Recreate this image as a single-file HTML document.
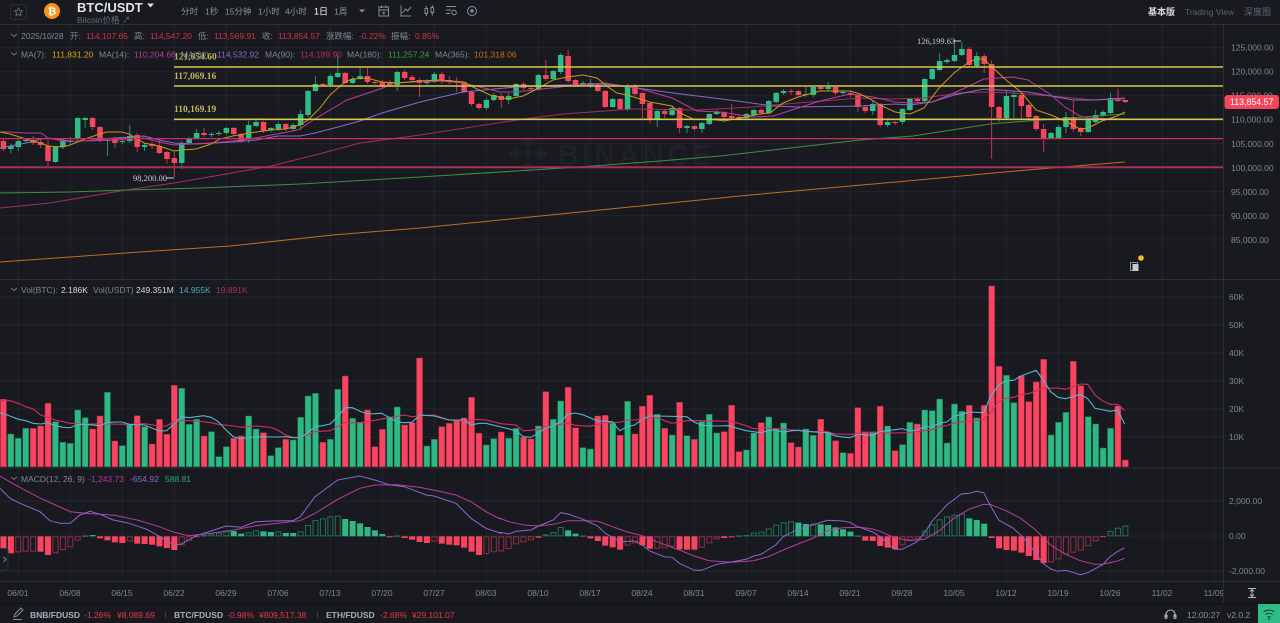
<!DOCTYPE html>
<html lang="zh">
<head>
<meta charset="utf-8">
<title>BTC/USDT</title>
<style>
html,body{margin:0;padding:0;background:#181a20;width:1280px;height:623px;overflow:hidden}
svg{display:block;position:absolute;left:0;top:0}
text{font-family:"Liberation Sans","Noto Sans CJK SC",sans-serif;font-size:8.5px;fill:#7f8794}
.y{font-size:8.5px;fill:#7f8794}
.d{font-size:8.5px;fill:#7f8794;text-anchor:middle}
.t{font-size:8.5px;fill:#8a919e}
.r{fill:#cf304a}
.k{font-family:"Liberation Serif",serif;font-size:9.5px;font-weight:700;fill:#c4b65a}
.m{font-family:"Liberation Serif",serif;font-size:8.5px;fill:#c8ccd2}
.s{fill:#e8384f;font-size:8.5px}
.p{fill:#a8afba;font-size:8.5px;font-weight:700}
.gl line{stroke:#22252b;stroke-width:1}
.ma{fill:none;stroke-width:1}
</style>
</head>
<body>
<svg width="1280" height="623" viewBox="0 0 1280 623" xmlns="http://www.w3.org/2000/svg">
<defs><clipPath id="c"><rect x="0" y="24" width="1223" height="579"/></clipPath></defs>
<rect width="1280" height="623" fill="#181a20"/>

<g class="gl" id="grid">
<line x1="0" x2="1224" y1="47.7" y2="47.7"/><line x1="0" x2="1224" y1="71.7" y2="71.7"/><line x1="0" x2="1224" y1="95.7" y2="95.7"/><line x1="0" x2="1224" y1="119.8" y2="119.8"/><line x1="0" x2="1224" y1="143.8" y2="143.8"/><line x1="0" x2="1224" y1="167.8" y2="167.8"/><line x1="0" x2="1224" y1="191.8" y2="191.8"/><line x1="0" x2="1224" y1="215.8" y2="215.8"/><line x1="0" x2="1224" y1="239.9" y2="239.9"/>
<line x1="0" x2="1224" y1="297" y2="297"/><line x1="0" x2="1224" y1="325" y2="325"/><line x1="0" x2="1224" y1="353" y2="353"/><line x1="0" x2="1224" y1="381" y2="381"/><line x1="0" x2="1224" y1="409" y2="409"/><line x1="0" x2="1224" y1="437" y2="437"/>
<line x1="0" x2="1224" y1="501" y2="501"/><line x1="0" x2="1224" y1="536" y2="536"/><line x1="0" x2="1224" y1="571" y2="571"/>
</g>

<!-- watermark -->
<g fill="#1e2127">
<path d="M528 134l7 7-7 7-7-7zM515 147l7 7-7 7-7-7zM541 147l7 7-7 7-7-7zM528 160l7 7-7 7-7-7zM528 149l5 5-5 5-5-5z"/>
</g>
<text x="558" y="165" style="font-size:29px;font-weight:700;letter-spacing:3.5px;fill:#1e2127">BINANCE</text>

<g id="chart" clip-path="url(#c)"></g>

<g clip-path="url(#c)">
<polyline class="ma" stroke="#a3305c" points="0,208 50,203 126,190 174,183 226,174 271,166 315,155 360,143 420,135 517,120 563,114 633,109 697,110 753,107 773,105 860,98 893,99 923,98 960,93 984,92 1013,93 1051,96 1093,100 1125,99"/>
<polyline class="ma" stroke="#3f8f45" points="0,193 70,192 126,190 200,188 300,184 420,177 580,167 660,161 720,156 860,140 913,136 990,124 1027,121 1125,114"/>
<polyline class="ma" stroke="#c06f1e" points="0,262 126,253 230,246 333,235 420,228 600,210 750,195 918,180 1027,170 1125,162"/>
<polyline class="ma" stroke="#8a68cf" points="0,148 15,145 26,143 41,139 48,138 70,141 85,141 115,138 144,136 159,140 174,143 196,144 233,142 256,140 278,136 300,136 315,133 338,127 360,121 382,113 420,102 463,92 516,87 560,85 578,85 605,84 637,88 673,93 730,100 773,106 798,107 860,106 895,104 910,105 932,102 954,95 984,89 1013,91 1028,92 1051,96 1073,100 1093,100 1125,98"/>
<polyline class="ma" stroke="#bb3d9d" points="0,132 10,132 26,133 41,133 48,138 63,141 85,141 115,140 144,138 159,142 174,145 189,144 211,143 233,141 256,138 271,135 293,131 300,129 313,120 347,100 383,88 393,83 413,82 440,81 463,83 480,87 500,92 515,92 533,90 560,87 577,85 605,83 637,88 672,98 697,111 720,112 753,117 773,116 798,108 820,101 850,94 873,97 895,102 910,103 932,102 954,93 984,79 1013,77 1028,80 1051,95 1065,107 1080,116 1088,118 1125,119"/>
<polyline class="ma" stroke="#c99a16" points="0,132 10,134 26,139 41,143 48,146 63,147 70,145 85,139 100,134 107,132 122,132 129,134 144,143 159,146 174,151 182,150 196,149 211,144 220,139 233,136 256,132 271,130 286,129 300,125 308,120 320,108 330,95 345,82 352,79 367,78 382,82 397,83 419,81 441,80 463,82 475,88 490,95 508,99 523,96 535,90 553,80 567,77 583,75 597,78 608,87 617,93 627,95 650,102 672,106 680,113 693,119 717,120 724,121 740,118 760,114 770,113 783,103 798,97 820,91 850,91 860,94 870,99 880,105 895,112 910,114 924,108 939,88 954,73 969,62 976,59 984,59 991,66 1006,80 1021,92 1036,110 1051,115 1065,121 1080,129 1088,128 1102,121 1117,116 1125,112"/>

<line x1="174" x2="1224" y1="67" y2="67" stroke="#d6c850" stroke-width="1.6"/>
<line x1="174" x2="1224" y1="86" y2="86" stroke="#d6c850" stroke-width="1.6"/>
<line x1="174" x2="1224" y1="119.3" y2="119.3" stroke="#d6c850" stroke-width="1.6"/>
<line x1="0" x2="1224" y1="138.6" y2="138.6" stroke="#c92f5f" stroke-width="1.3"/>
<line x1="0" x2="1224" y1="167.3" y2="167.3" stroke="#a62f59" stroke-width="2"/>
</g>

<text class="k" x="174" y="59.5">121,054.60</text>
<text class="k" x="174" y="79">117,069.16</text>
<text class="k" x="174" y="112">110,169.19</text>
<text class="m" x="133" y="181">98,200.00</text><line x1="166" x2="174" y1="178" y2="178" stroke="#c8ccd2"/>
<text class="m" x="917" y="44">126,199.63</text><line x1="953" x2="961" y1="41" y2="41" stroke="#c8ccd2"/>

<!-- small chat icon -->
<g transform="translate(1130,262)"><rect x="0.5" y="0.5" width="7" height="8" fill="none" stroke="#8a919e"/><rect x="2.5" y="2" width="6" height="7" fill="#c8ccd2"/></g>
<circle cx="1141" cy="258" r="2.8" fill="#f0c020"/>

<!-- dividers -->
<g stroke="#2b2f36" stroke-width="1">
<line x1="0" x2="1280" y1="24.5" y2="24.5"/>
<line x1="0" x2="1280" y1="279.5" y2="279.5"/>
<line x1="0" x2="1280" y1="468" y2="468"/>
<line x1="0" x2="1280" y1="581.5" y2="581.5"/>
<line x1="1223.5" x2="1223.5" y1="24" y2="603"/>
</g>
<rect x="0" y="603" width="1280" height="1" fill="#0e1014"/>

<!-- header -->
<rect x="10.5" y="4.5" width="16" height="15" rx="3" fill="none" stroke="#2b2f36"/>
<path d="M18.5 8l1.2 2.6 2.8.3-2.1 1.9.6 2.8-2.5-1.4-2.5 1.4.6-2.8-2.1-1.9 2.8-.3z" fill="none" stroke="#5e6673"/>
<circle cx="52" cy="11" r="8" fill="#f7931a"/>
<text x="52" y="14.5" style="font-size:10.5px;font-weight:700;fill:#fff;text-anchor:middle">₿</text>
<text x="77" y="12" style="font-size:13px;font-weight:700;fill:#dfe2e6">BTC/USDT</text>
<path d="M147 3.5h7l-3.5 4z" fill="#dfe2e6"/>
<text x="77" y="23" style="font-size:8.5px;fill:#676f7c">Bitcoin价格 ↗</text>
<g style="font-size:9px">
<text class="t" x="181" y="14.5">分时</text>
<text class="t" x="205" y="14.5">1秒</text>
<text class="t" x="225" y="14.5">15分钟</text>
<text class="t" x="258" y="14.5">1小时</text>
<text class="t" x="285" y="14.5">4小时</text>
<text x="314" y="14.5" style="fill:#ffffff;font-size:9px">1日</text>
<text class="t" x="334" y="14.5">1周</text>
</g>
<path d="M359 9.5h6l-3 3z" fill="#8a919e"/>
<g fill="none" stroke="#848e9c" stroke-width="1">
<rect x="379" y="7" width="9.5" height="9"/><path d="M379 10h9.5M381.5 5.5v2.5M386 5.5v2.5M383.8 11.5v3M382.3 13h3"/>
<path d="M401 5.5v10.5h10M402.5 13l3-4 2 2 3.5-4"/>
<path d="M425 8.5h2.6v5H425zM431 7.5h2.6v5H431zM426.3 6v2.5M426.3 13.5v2.5M432.3 5v2.5M432.3 12.5v3"/>
<path d="M446 6.5h10M446 10h5M446 13.5h4"/><circle cx="454" cy="12.5" r="2.3"/>
<circle cx="472" cy="11" r="4.5"/><circle cx="472" cy="11" r="1.2" fill="#848e9c"/>
</g>
<text x="1148" y="15" style="font-size:9px;font-weight:700;fill:#d5d8dc">基本版</text>
<text x="1185" y="15" style="font-size:8.5px;fill:#5e6673">Trading View</text>
<text x="1244" y="15" style="font-size:9px;fill:#5e6673">深度图</text>

<!-- chevrons -->
<g fill="none" stroke="#6c7480" stroke-width="1">
<path d="M11 34l3 2.5 3-2.5M11 52.5l3 2.5 3-2.5M11 288l3 2.5 3-2.5M11 477l3 2.5 3-2.5"/>
</g>

<!-- legends -->
<text x="21" y="39">2025/10/28</text><text x="70" y="39">开:</text><text class="r" x="86" y="39">114,107.65</text>
<text x="134" y="39">高:</text><text class="r" x="150" y="39">114,547.20</text>
<text x="198" y="39">低:</text><text class="r" x="214" y="39">113,569.91</text>
<text x="262" y="39">收:</text><text class="r" x="278" y="39">113,854.57</text>
<text x="326" y="39">涨跌幅:</text><text class="r" x="359" y="39">-0.22%</text>
<text x="391" y="39">振幅:</text><text class="r" x="415" y="39">0.85%</text>

<text x="21" y="57.5">MA(7):</text><text x="52" y="57.5" style="fill:#d9a514">111,831.20</text>
<text x="99" y="57.5">MA(14):</text><text x="134" y="57.5" style="fill:#b63a9b">110,204.66</text>
<text x="181" y="57.5">MA(30):</text><text x="217" y="57.5" style="fill:#8a68cf">114,532.92</text>
<text x="265" y="57.5">MA(90):</text><text x="300" y="57.5" style="fill:#bb2f58">114,189.90</text>
<text x="347" y="57.5">MA(180):</text><text x="388" y="57.5" style="fill:#3f9a4a">111,257.24</text>
<text x="435" y="57.5">MA(365):</text><text x="474" y="57.5" style="fill:#c8731c">101,318.06</text>

<text x="21" y="293">Vol(BTC):</text><text x="61" y="293" style="fill:#d5d8dc">2.186K</text>
<text x="93" y="293">Vol(USDT)</text><text x="136" y="293" style="fill:#d5d8dc">249.351M</text>
<text x="179" y="293" style="fill:#4aa9c4">14.955K</text><text x="216" y="293" style="fill:#b52c55">19.891K</text>

<text x="21" y="482">MACD(12, 26, 9)</text><text x="88" y="482" style="fill:#b63a9b">-1,243.73</text>
<text x="130" y="482" style="fill:#8a68cf">-654.92</text><text x="165" y="482" style="fill:#2ba57a">588.81</text>

<!-- price axis -->
<text class="y" x="1231" y="50.5">125,000.00</text>
<text class="y" x="1231" y="74.5">120,000.00</text>
<text class="y" x="1231" y="98.5">115,000.00</text>
<text class="y" x="1231" y="122.7">110,000.00</text>
<text class="y" x="1231" y="146.8">105,000.00</text>
<text class="y" x="1231" y="170.8">100,000.00</text>
<text class="y" x="1231" y="194.8">95,000.00</text>
<text class="y" x="1231" y="218.8">90,000.00</text>
<text class="y" x="1231" y="242.8">85,000.00</text>
<rect x="1224.5" y="95" width="54.5" height="14" rx="3" fill="#f6465d"/>
<text x="1251.7" y="105" style="font-size:8.8px;fill:#fff;text-anchor:middle">113,854.57</text>

<text class="y" x="1229" y="300">60K</text><text class="y" x="1229" y="328">50K</text><text class="y" x="1229" y="356">40K</text><text class="y" x="1229" y="384">30K</text><text class="y" x="1229" y="412">20K</text><text class="y" x="1229" y="440">10K</text>
<text class="y" x="1229" y="504">2,000.00</text><text class="y" x="1229" y="539">0.00</text><text class="y" x="1229" y="574">-2,000.00</text>

<!-- date axis -->
<g clip-path="url(#c)">
<text class="d" x="18" y="596">06/01</text><text class="d" x="70" y="596">06/08</text><text class="d" x="122" y="596">06/15</text><text class="d" x="174" y="596">06/22</text><text class="d" x="226" y="596">06/29</text><text class="d" x="278" y="596">07/06</text><text class="d" x="330" y="596">07/13</text><text class="d" x="382" y="596">07/20</text><text class="d" x="434" y="596">07/27</text><text class="d" x="486" y="596">08/03</text><text class="d" x="538" y="596">08/10</text><text class="d" x="590" y="596">08/17</text><text class="d" x="642" y="596">08/24</text><text class="d" x="694" y="596">08/31</text><text class="d" x="746" y="596">09/07</text><text class="d" x="798" y="596">09/14</text><text class="d" x="850" y="596">09/21</text><text class="d" x="902" y="596">09/28</text><text class="d" x="954" y="596">10/05</text><text class="d" x="1006" y="596">10/12</text><text class="d" x="1058" y="596">10/19</text><text class="d" x="1110" y="596">10/26</text><text class="d" x="1162" y="596">11/02</text><text class="d" x="1214" y="596">11/09</text>
</g>
<g fill="none" stroke="#b0b6c0" stroke-width="1"><path d="M1248 588.5h8M1248 597.5h8M1252 590v6M1250 591.5l2-2 2 2M1250 594.5l2 2 2-2"/></g>

<!-- collapse button -->
<rect x="-4" y="548.5" width="12" height="22" rx="3" fill="#181a20" stroke="#2b2f36"/>
<path d="M3.5 557l2.5 2.5-2.5 2.5" fill="none" stroke="#7f8794"/>

<!-- status bar -->
<g fill="none" stroke="#848e9c" stroke-width="1"><path d="M14 617l1-3 6-6 2 2-6 6zM13 619.5h9"/></g>
<text class="p" x="30" y="618">BNB/FDUSD</text><text class="s" x="84" y="618">-1.26%</text><text class="s" x="117" y="618">¥8,089.69</text>
<rect x="165" y="611" width="1" height="7" fill="#3a3f47"/>
<text class="p" x="174" y="618">BTC/FDUSD</text><text class="s" x="227" y="618">-0.98%</text><text class="s" x="259" y="618">¥809,517.38</text>
<rect x="317" y="611" width="1" height="7" fill="#3a3f47"/>
<text class="p" x="326" y="618">ETH/FDUSD</text><text class="s" x="380" y="618">-2.68%</text><text class="s" x="412" y="618">¥29,101.07</text>

<g fill="none" stroke="#a8afba" stroke-width="1.1"><path d="M1166 617v-2.5a4.5 4.5 0 0 1 9 0v2.5"/><rect x="1165" y="614.5" width="2" height="4" rx="1"/><rect x="1174" y="614.5" width="2" height="4" rx="1"/></g>
<text x="1187" y="618" style="fill:#8a919e;font-size:8.5px">12:00:27</text>
<text x="1227" y="618" style="fill:#8a919e;font-size:8.5px">v2.0.2</text>
<rect x="1258" y="604" width="22" height="19" fill="#2ebd85"/>
<g fill="none" stroke="#123b2c" stroke-width="1"><path d="M1263.5 612a9 9 0 0 1 11 0M1265.5 614.5a6 6 0 0 1 7 0M1267.5 617a3 3 0 0 1 3 0"/></g>
<circle cx="1269" cy="619" r=".9" fill="#123b2c"/>
</svg>
<script>
(function(){
var G='#2ebd85',R='#f6465d',X=function(i){return 18.3+7.43*i};
var NS='http://www.w3.org/2000/svg',root=document.getElementById('chart');
function el(tag,attrs){var e=document.createElementNS(NS,tag);for(var a in attrs){e.setAttribute(a,attrs[a])}root.appendChild(e)}
/* candles: colour, top, bottom, high, low */
var c=[
'r141,149,139,151','g146,149,144,153','g141,147,139,151','g140,141,138,143','r140,143,136,145','r142,145,139,148','r146,161,140,166','g147,162,146,163','g141,147,139,149','g141,142,137,144','g118,139,117,140','g118,120,117,128','r118,127,117,130','r127,141,126,142','g140,141,138,156','r139,143,137,148','g141,142,139,144','g136,141,125,143','r135,147,133,152','g145,147,143,151','r144,146,142,149','r146,153,138,154','r152,159,151,164','r158,163,152,177','g143,163,141,169','g139,143,137,145','g133,138,129,139','r133,135,128,137','g134,135,132,137','g133,134,131,136','g128,133,127,135','r128,134,127,136','r134,141,133,143','g125,139,121,143','g122,126,118,127','r122,131,121,133','g128,130,127,132','g124,129,122,131','r124,129,123,131','g125,129,123,131','g114,125,110,130','g91,115,90,117','g84,91,76,92','r84,85,83,87','g76,85,74,86','g73,77,55,78','r73,83,72,84','g79,83,77,84','g76,79,68,80','r76,82,68,84','r82,83,80,85','r82,86,80,88','r82,85,80,87','g72,85,71,91','r72,78,70,80','r77,80,75,82','r80,83,78,97','g81,83,79,85','g74,82,72,83','r74,81,72,84','r80,82,76,84','r81,82,77,92','r82,92,81,93','r92,104,91,106','r104,108,103,110','g100,108,98,110','g95,100,93,101','r96,100,93,108','g96,100,93,104','g84,96,83,97','r84,88,82,90','r88,89,86,91','g75,89,74,91','r75,79,60,81','g71,79,70,80','g55,72,53,74','r56,81,50,83','r80,85,79,87','g83,85,81,87','g83,86,79,88','r85,91,84,92','r91,107,90,108','g99,107,98,108','r99,109,98,110','g86,109,84,111','r86,94,84,96','r93,104,92,118','r103,119,102,123','g111,119,110,127','r111,114,110,118','g108,115,107,116','r108,128,107,133','g126,128,125,133','r126,129,125,131','g123,129,122,133','g114,124,113,125','g112,114,110,115','r112,117,111,119','r116,118,104,120','r117,118,115,120','g114,118,113,119','g110,115,109,116','r110,113,108,115','g101,113,100,114','g93,102,92,103','g91,93,89,95','r91,92,89,95','r91,95,90,97','g94,95,87,97','g87,95,86,97','r87,89,85,91','g87,89,82,91','r87,93,86,95','g92,93,90,95','r93,95,91,97','r95,107,94,112','r107,111,105,113','g104,111,101,115','r104,125,103,127','g122,125,120,127','r122,123,121,125','g109,122,108,124','g99,110,98,111','r99,101,97,103','g79,101,78,102','g69,79,68,80','g61,70,53,71','g60,62,58,64','g55,61,44,62','g49,55,42,56','r49,65,47,66','g56,66,52,68','r56,64,54,73','r64,107,60,159','r107,118,106,122','g96,118,91,120','g95,97,91,118','r95,106,94,119','r105,117,104,119','r116,129,115,131','r129,138,124,152','g133,138,132,139','g127,138,125,139','g117,127,112,133','r117,129,101,132','r128,132,127,136','g119,132,118,133','g115,122,110,123','g112,116,110,117','g98,113,93,114','r98,101,89,102','r100,102,100,103'
];
/* vol tops in zoom-coords (y=280+z/3) */
var vol=[358,462,475,445,445,438,370,425,487,490,390,413,447,408,337,483,497,433,407,440,492,418,463,316,325,433,418,468,455,530,500,475,468,408,447,458,527,503,478,480,412,348,340,487,478,328,288,415,427,390,500,448,410,381,435,428,234,498,478,440,430,422,414,352,460,495,476,456,475,445,472,477,438,335,418,363,322,443,503,507,408,406,430,466,364,462,379,346,403,445,465,367,467,478,425,403,459,455,376,515,510,459,428,411,445,429,488,501,447,466,418,458,482,518,520,383,455,455,379,438,512,494,427,432,390,392,357,489,372,394,376,414,376,18,259,286,368,288,365,306,238,465,427,397,244,317,410,432,504,445,378,540];
var volG={};
[-1,0,1,5,6,7,8,9,12,14,15,17,22,23,24,26,27,28,31,32,34,35,37,38,39,40,42,43,45,46,50,51,55,56,63,64,66,67,70,72,73,76,77,80,82,86,88,90,92,93,94,98,99,101,102,103,106,107,109,111,115,117,119,120,122,123,124,125,126,127,129,133,134,139,140,141,144,145,146,147].forEach(function(i){volG[i]=1});
/* macd: [colour(+g/-r), hollow, z] z in coords y=470+z/3, base 199 */
var m='r250,r250,R247,R245,R245,r245,r255,R250,R240,R232,R212,g197,g195,r205,r211,r217,r219,R214,r221,r222,r224,r229,r234,r240,R226,R212,r201,G195,G191,G188,G184,g183,g191,G187,G181,g184,g186,G184,g189,g189,G184,G165,G150,G145,G139,G137,g147,g153,g160,g171,g181,g192,r202,g197,r204,r209,r216,r219,R215,r221,r224,r226,r233,r245,r255,R252,R247,R244,R237,R223,R217,R211,r203,G193,G186,G171,g181,g191,g197,r205,r213,r227,r232,r239,R227,R220,r226,r236,R236,R235,R230,r238,r239,r239,R233,R220,R208,r204,r202,g197,G195,G188,G185,G175,G164,G157,G154,g158,g162,G161,g163,g165,g172,g178,g185,g197,r212,r213,r228,r233,r238,R226,R211,R208,G182,G163,G148,G139,G134,G131,g145,g150,g161,r204,r235,r240,r242,r248,r258,r270,r279,R277,R268,R253,R248,R242,R229,R214,r201,G183,G173,G167'.split(',');
/* vertical grid */
for(var k=0;k<24;k++){var gx=X(k*7);el('line',{x1:gx,x2:gx,y1:25,y2:581,stroke:'#22252b'})}
/* candles */
c.forEach(function(d,n){var col=d[0]=='g'?G:R,a=d.slice(1).split(',').map(Number),x=X(n-2);
el('line',{x1:x,x2:x,y1:a[2],y2:a[3],stroke:col,'stroke-opacity':.72});
el('rect',{x:x-2.75,y:a[0],width:5.5,height:Math.max(a[1]-a[0],1),fill:col});});
/* volume */
vol.forEach(function(z,n){var i=n-2,x=X(i),y=280+z/3,g=volG[i];
el('rect',{x:x-3,y:y,width:6,height:466.8-y,fill:g?'#2eb883':'#fb4460',stroke:g?'#1f6f52':'#9c3044','stroke-width':.5});});
/* macd */
m.forEach(function(d,n){var x=X(n-2),z=+d.slice(1),t=d[0],y=470+Math.min(z,199)/3,h=Math.max(Math.abs(z-199)/3,.8);
if(t=='r')el('rect',{x:x-3,y:y,width:6,height:h,fill:'#fb4460'});
else if(t=='g')el('rect',{x:x-3,y:y,width:6,height:h,fill:'#2eb883'});
else el('rect',{x:x-2.5,y:y+.5,width:5,height:Math.max(h-1,.5),fill:'none',stroke:t=='R'?'#8f2f42':'#1f7355'});});
function pl(segs,y0,col,w){var p=[];segs.forEach(function(sg){for(var j=0;j<sg[1].length;j+=2){p.push((sg[0]+sg[1][j]/3).toFixed(1)+','+(y0+sg[1][j+1]/3).toFixed(1))}});
el('polyline',{fill:'none',stroke:col,'stroke-width':w,points:p.join(' ')})}
/* volume MAs */
pl([[0,[0,362,30,362,55,370,77,380,99,387,122,405,144,412,166,420,211,430,255,432,321,432,388,433,433,431,478,438,500,438,522,425,544,421,589,423,633,428,655,433,700,438,723,442,767,438,812,442,834,451,857,465,879,472,901,473,945,455,990,452,1013,440,1035,428,1079,428,1124,421,1168,413,1213,405,1235,410,1257,408]],
[420,[0,407,43,405,87,420,132,423,176,418,198,420,243,431,288,435,310,452,332,451,354,448,376,440,399,438,421,433,443,430,466,436,510,439,555,428,599,427,622,420,644,420,689,413,711,413,755,430,800,422,845,422,934,424,978,437,1000,446,1045,444,1090,448,1134,451,1178,455,1223,455,1245,462]],
[840,[0,462,30,463,76,458,120,458,165,459,209,458,276,449,298,440,320,437,343,428,387,424,431,418,454,395,476,365,498,355,521,352,543,343,565,341,610,325,654,324,677,328,721,312,743,313,765,345,787,362,810,373,832,373,854,391]]],280,'#d02f63',1.1);
pl([[0,[0,398,22,405,55,418,77,422,99,430,122,432,144,428,166,437,188,442,211,443,233,433,255,433,299,437,321,428,344,426,366,426,388,433,433,435,478,453,500,452,522,432,544,410,567,413,589,410,611,407,633,412,655,425,678,450,700,470,723,476,767,470,834,471,857,470,879,473,901,473,923,458,945,440,968,437,990,432,1013,410,1035,383,1057,383,1079,393,1102,402,1146,400,1168,413,1190,425,1213,428,1235,427,1257,408]],
[420,[0,405,43,408,87,420,132,420,154,435,176,430,198,430,243,441,288,452,310,470,332,472,354,460,376,445,399,438,421,425,443,403,466,399,488,404,533,423,577,425,599,452,622,440,644,435,666,418,689,408,711,408,800,410,822,426,845,436,889,438,925,437,978,452,1023,458,1045,452,1067,450,1090,457,1112,453,1134,451,1156,454,1201,457,1223,458,1245,467]],
[840,[0,470,30,473,53,463,98,466,120,455,165,449,187,446,209,453,231,450,254,440,276,441,298,430,320,426,343,408,365,404,387,396,431,398,454,345,476,315,498,302,521,301,543,288,588,271,610,300,632,335,654,352,677,356,721,343,743,356,765,385,810,394,832,390,854,432]]],280,'#56b6d0',1.1);
/* macd lines */
pl([[0,[0,18,55,50,122,85,166,105,211,125,255,130,344,136,411,150,478,170,522,187,567,197,633,190,700,180,767,167,834,160,901,152,945,130,1013,88,1079,55,1124,45,1191,44,1258,52,1324,65,1368,75,1413,95,1458,125,1502,148]],
[500,[0,145,26,155,71,165,115,168,160,163,204,152,249,152,293,154,338,170,382,186,427,197,471,215,538,240,583,258,627,272,694,277,761,272,805,260,850,240,894,222,938,205,983,182,1027,173]],
[860,[0,172,38,177,60,184,104,203,149,212,193,208,238,182,282,145,327,118,371,103,393,104,438,122,482,145,527,180,572,225,616,252,661,272,705,283,727,283,772,273,794,265]]],470,'#bb3d9d',1);
pl([[0,[0,55,30,85,60,100,120,125,150,152,180,160,211,160,240,135,270,124,300,133,340,150,388,160,440,178,480,200,522,225,544,222,589,197,633,183,678,168,723,172,767,155,812,153,857,152,879,152,901,140,945,80,1013,30,1079,18,1124,30,1168,44,1213,50,1279,75,1302,78,1368,100,1413,145,1458,175,1502,190]],
[500,[0,187,26,192,49,184,93,180,115,168,160,150,182,128,204,132,249,148,293,168,316,190,360,215,405,213,427,225,449,243,493,260,516,262,538,280,583,301,605,301,650,283,694,276,738,268,761,258,783,253,827,225,850,200,894,178,938,165,983,151,1027,153,1050,157,1072,170]],
[860,[0,172,16,178,38,186,60,200,104,238,127,238,171,215,193,190,215,155,260,105,304,72,327,70,349,64,371,68,393,110,416,150,460,175,482,195,505,220,527,250,549,280,572,297,594,304,616,301,638,307,661,314,683,308,727,285,750,260,772,245,794,233]]],470,'#8a68cf',1);
})();
</script>
</body>
</html>
